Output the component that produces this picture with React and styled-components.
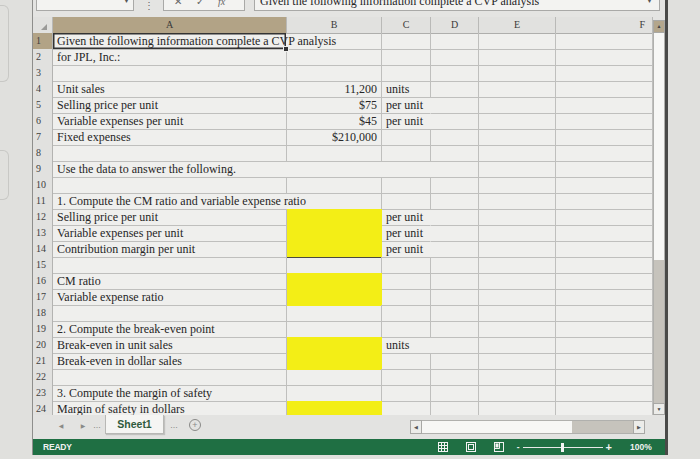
import React from 'react';
import styled, { createGlobalStyle } from 'styled-components';

const GlobalStyle = createGlobalStyle`
  html, body { margin: 0; padding: 0; }
  body {
    width: 700px;
    height: 459px;
    overflow: hidden;
    background: #e0e0dd;
    font-family: "Liberation Serif", "DejaVu Serif", serif;
    color: #262626;
  }
`;

const COLS = '20px 234px 95px 49px 48px 77px 97px';
const GRID = '#bfbfbd';

const Page = styled.div`
  display: flex;
  height: 459px;
`;

const LeftDesk = styled.div`
  width: 32px;
  flex-shrink: 0;
  display: flex;
  flex-direction: column;
  gap: 68px;
  padding-top: 5px;
`;

const DeskTile = styled.div`
  width: 8px;
  height: ${props => props.h}px;
  border: 1px solid #c8c8c5;
  border-left: none;
  border-radius: 0 6px 6px 0;
`;

const Window = styled.div`
  width: 632px;
  height: 455px;
  flex-shrink: 0;
  display: flex;
  flex-direction: column;
  background: #e4e4e2;
  border-left: 1px solid #8e8e8c;
  border-right: 3px solid #4a4a48;
  overflow: hidden;
`;

const FormulaBar = styled.div`
  height: 17px;
  flex-shrink: 0;
  display: flex;
  align-items: flex-end;
  overflow: hidden;
  padding-bottom: 6px;
  box-sizing: border-box;
`;

const Box = styled.div`
  height: 20px;
  box-sizing: border-box;
  border: 1px solid #a9a9a7;
  background: #f3f3f1;
  display: flex;
  align-items: center;
  font-size: 12px;
  flex-shrink: 0;
`;

const NameBox = styled(Box)`
  width: 98px;
  margin-left: 3px;
  justify-content: flex-end;
  padding-right: 3px;
  font-size: 7px;
  color: #555;
`;

const Dots = styled.div`
  width: 29px;
  text-align: center;
  font-size: 10px;
  line-height: 10px;
  color: #666;
`;

const FxBox = styled(Box)`
  width: 82px;
  gap: 14px;
  padding-left: 10px;
  font-size: 10px;
  color: #666;
`;

const FormulaInput = styled(Box)`
  flex: 1;
  margin-left: 9px;
  margin-right: 5px;
  padding: 0 6px 0 5px;
  justify-content: space-between;
`;

const Main = styled.div`
  height: 398px;
  flex-shrink: 0;
  display: flex;
`;

const Sheet = styled.div`
  width: 620px;
  display: flex;
  flex-direction: column;
  overflow: hidden;
  background: #efefed;
`;

const HeaderRow = styled.div`
  display: grid;
  grid-template-columns: ${COLS};
  height: 16px;
  flex-shrink: 0;
  background: #e1e1df;
`;

const ColHead = styled.div`
  box-sizing: border-box;
  border-right: 1px solid #b9b9b7;
  border-bottom: 1px solid #aeaeac;
  background: ${props => props.active ? '#b2a386' : 'transparent'};
  font-size: 10px;
  line-height: 16px;
  text-align: ${props => props.right ? 'right' : 'center'};
  padding-right: ${props => props.right ? '7px' : '0'};
  color: #3a3a3a;
`;

const Corner = styled(ColHead)`
  display: flex;
  align-items: flex-end;
  justify-content: flex-end;
  padding: 0 5px 3px 0;
`;

const Rows = styled.div`
  display: flex;
  flex-direction: column;
`;

const Row = styled.div`
  display: grid;
  grid-template-columns: ${COLS};
  height: 16px;
  flex-shrink: 0;
`;

const RowHead = styled.div`
  box-sizing: border-box;
  background: ${props => props.active ? '#b2a386' : '#e1e1df'};
  border-right: 1px solid #b3b3b1;
  border-bottom: 1px solid #cacac8;
  font-size: 10px;
  line-height: 16px;
  padding-left: 3px;
  color: #404040;
`;

const Cell = styled.div`
  box-sizing: border-box;
  position: relative;
  background: ${props => props.fill ? '#f3ee16' : 'transparent'};
  border-right: 1px solid ${props => props.open ? 'transparent' : props.fill ? '#f3ee16' : GRID};
  border-bottom: 1px solid ${props => props.edge ? '#4a4a40' : props.fill ? '#f3ee16' : GRID};
  box-shadow: ${props => props.selected ? 'inset 0 0 0 1.5px #333' : 'none'};
  font-size: 12px;
  line-height: 16px;
  padding: 0 4px 0 4px;
  white-space: nowrap;
  text-align: ${props => props.right ? 'right' : 'left'};
  direction: ${props => props.right ? 'rtl' : 'ltr'};
  overflow: visible;
  z-index: ${props => props.selected ? 1 : 0};

  &::after {
    content: '';
    display: ${props => props.selected ? 'block' : 'none'};
    position: absolute;
    right: -3px;
    bottom: -3px;
    width: 4px;
    height: 4px;
    background: #333;
    border: 1px solid #efefed;
  }
`;

const VScroll = styled.div`
  width: 12px;
  display: flex;
  flex-direction: column;
  padding-top: 3px;
  box-sizing: border-box;
`;

const ScrollBtn = styled.div`
  height: ${props => props.h}px;
  flex-shrink: 0;
  box-sizing: border-box;
  background: ${props => props.tan ? '#b3a68c' : '#ecece9'};
  border: 1px solid #a8a8a5;
  display: flex;
  align-items: center;
  justify-content: center;
  font-size: 5px;
  color: #444;
`;

const Track = styled.div`
  flex: ${props => props.grow ? '1' : `0 0 ${props.size}px`};
  background: ${props => props.thumb ? '#c6c3bc' : '#f7f7f5'};
  border-left: 1px solid #b0b0ad;
  border-right: 1px solid #b0b0ad;
`;

const TabBar = styled.div`
  height: 24px;
  flex-shrink: 0;
  display: flex;
  align-items: flex-start;
  background: #e3e3e1;
  font-family: "Liberation Sans", "DejaVu Sans", sans-serif;
  color: #8a8a88;
`;

const TabNav = styled.div`
  width: ${props => props.w}px;
  height: 20px;
  flex-shrink: 0;
  display: flex;
  align-items: center;
  justify-content: center;
  font-size: ${props => props.small ? 6 : 9}px;
`;

const SheetTab = styled.div`
  width: 59px;
  height: 19px;
  flex-shrink: 0;
  box-sizing: border-box;
  background: #f5f5f3;
  border: 1px solid #b8b8b5;
  border-top: none;
  box-shadow: 1px 1px 1px rgba(0, 0, 0, 0.15);
  display: flex;
  align-items: center;
  justify-content: center;
  font-size: 10.5px;
  font-weight: bold;
  color: #2f5a3d;
`;

const AddSheet = styled.div`
  width: 10px;
  height: 10px;
  border: 1px solid #8a8a88;
  border-radius: 50%;
  display: flex;
  align-items: center;
  justify-content: center;
  font-size: 9px;
  line-height: 9px;
  margin: 4px 0 0 5px;
`;

const HScroll = styled.div`
  display: flex;
  height: 14px;
  margin: 5px 20px 0 auto;
  width: 235px;
  box-sizing: border-box;
`;

const HBtn = styled.div`
  width: 12px;
  flex-shrink: 0;
  box-sizing: border-box;
  border: 1px solid #a8a8a5;
  background: #ecece9;
  display: flex;
  align-items: center;
  justify-content: center;
  font-size: 5px;
  color: #555;
`;

const HTrack = styled.div`
  flex: ${props => props.grow ? '1' : `0 0 ${props.size}px`};
  background: ${props => props.thumb ? '#c6c3bc' : '#f7f7f5'};
  border-top: 1px solid #b0b0ad;
  border-bottom: 1px solid #b0b0ad;
`;

const StatusBar = styled.div`
  height: 16px;
  flex-shrink: 0;
  display: flex;
  align-items: center;
  background: #1f6f43;
  color: #f2f2f2;
  font-family: "Liberation Sans", "DejaVu Sans", sans-serif;
  padding-left: 10px;
`;

const Ready = styled.span`
  font-size: 8.5px;
  font-weight: bold;
  letter-spacing: -0.2px;
`;

const ViewIcons = styled.div`
  display: flex;
  align-items: center;
  gap: 18px;
  margin-left: 366px;
`;

const Zoom = styled.div`
  display: flex;
  align-items: center;
  margin-left: 13px;
  font-size: 8.5px;
  font-weight: bold;
`;

const SliderLine = styled.div`
  width: 80px;
  height: 1px;
  margin: 0 3px;
  background: #e8e8e8;
  display: flex;
  justify-content: center;
  align-items: center;
`;

const SliderThumb = styled.div`
  width: 3px;
  height: 9px;
  background: #f4f4f4;
  margin-left: -1px;
`;

const Percent = styled.span`
  margin-left: 18px;
`;

const rows = [
  { a: 'Given the following information complete a CVP analysis', open: 'a', selected: true },
  { a: 'for JPL, Inc.:' },
  {},
  { a: 'Unit sales', b: '11,200', c: 'units' },
  { a: 'Selling price per unit', b: '$75', c: 'per unit', open: 'c' },
  { a: 'Variable expenses per unit', b: '$45', c: 'per unit', open: 'c' },
  { a: 'Fixed expenses', b: '$210,000' },
  {},
  { a: 'Use the data to answer the following.', open: 'abc' },
  {},
  { a: '1. Compute the CM ratio and variable expense ratio', open: 'a' },
  { a: 'Selling price per unit', fill: true, c: 'per unit', open: 'c' },
  { a: 'Variable expenses per unit', fill: true, edge: true, c: 'per unit', open: 'c' },
  { a: 'Contribution margin per unit', fill: true, edge: true, c: 'per unit', open: 'c' },
  {},
  { a: 'CM ratio', fill: true },
  { a: 'Variable expense ratio', fill: true },
  {},
  { a: '2. Compute the break-even point' },
  { a: 'Break-even in unit sales', fill: true, c: 'units', open: 'c' },
  { a: 'Break-even in dollar sales', fill: true },
  {},
  { a: '3. Compute the margin of safety' },
  { a: 'Margin of safety in dollars', fill: true },
];

function GridIcon() {
  return (
    <svg width="10" height="10" viewBox="0 0 10 10" fill="none" stroke="#f2f2f2" strokeWidth="1">
      <rect x="0.5" y="0.5" width="9" height="9" />
      <path d="M3.5 0.5V9.5M6.5 0.5V9.5M0.5 3.5H9.5M0.5 6.5H9.5" />
    </svg>
  );
}

function PageIcon() {
  return (
    <svg width="10" height="10" viewBox="0 0 10 10" fill="none" stroke="#f2f2f2" strokeWidth="1">
      <rect x="0.5" y="0.5" width="9" height="9" />
      <rect x="2.5" y="2.5" width="5" height="5" />
    </svg>
  );
}

function BreakIcon() {
  return (
    <svg width="10" height="10" viewBox="0 0 10 10" fill="none" stroke="#f2f2f2" strokeWidth="1">
      <rect x="0.5" y="0.5" width="9" height="9" />
      <path d="M0.5 6.5H5.5V0.5" />
      <rect x="1.5" y="1.5" width="3" height="4" fill="#f2f2f2" stroke="none" />
    </svg>
  );
}

function Triangle() {
  return (
    <svg width="6" height="6" viewBox="0 0 6 6">
      <path d="M6 0V6H0Z" fill="#9a9a98" />
    </svg>
  );
}

export default function App() {
  return (
    <Page>
      <GlobalStyle />
      <LeftDesk>
        <DeskTile h={75} />
        <DeskTile h={48} />
      </LeftDesk>
      <Window>
        <FormulaBar>
          <NameBox>▼</NameBox>
          <Dots>⋮</Dots>
          <FxBox><span>✕</span><span>✓</span><i>fx</i></FxBox>
          <FormulaInput>
            <span>Given the following information complete a CVP analysis</span>
            <span style={{ fontSize: 7, color: '#555' }}>▼</span>
          </FormulaInput>
        </FormulaBar>

        <Main>
          <Sheet>
            <HeaderRow>
              <Corner><Triangle /></Corner>
              <ColHead active>A</ColHead>
              <ColHead>B</ColHead>
              <ColHead>C</ColHead>
              <ColHead>D</ColHead>
              <ColHead>E</ColHead>
              <ColHead right>F</ColHead>
            </HeaderRow>
            <Rows>
              {rows.map((r, i) => {
                const open = r.open || '';
                return (
                  <Row key={i}>
                    <RowHead active={i === 0}>{i + 1}</RowHead>
                    <Cell open={open.includes('a')} selected={r.selected}>{r.a}</Cell>
                    <Cell right open={open.includes('b')} fill={r.fill} edge={r.edge}>{r.b}</Cell>
                    <Cell open={open.includes('c')}>{r.c}</Cell>
                    <Cell />
                    <Cell />
                    <Cell />
                  </Row>
                );
              })}
            </Rows>
          </Sheet>
          <VScroll>
            <ScrollBtn h={13} tan>▲</ScrollBtn>
            <Track size={227} />
            <Track grow thumb />
            <ScrollBtn h={12}>▼</ScrollBtn>
          </VScroll>
        </Main>

        <TabBar>
          <TabNav w={22} />
          <TabNav w={12} small>◀</TabNav>
          <TabNav w={12} small style={{ marginLeft: 10 }}>▶</TabNav>
          <TabNav w={16}>...</TabNav>
          <SheetTab>Sheet1</SheetTab>
          <TabNav w={20}>...</TabNav>
          <AddSheet>+</AddSheet>
          <HScroll>
            <HBtn>◀</HBtn>
            <HTrack size={150} />
            <HTrack grow thumb />
            <HBtn>▶</HBtn>
          </HScroll>
        </TabBar>

        <StatusBar>
          <Ready>READY</Ready>
          <ViewIcons>
            <GridIcon />
            <PageIcon />
            <BreakIcon />
          </ViewIcons>
          <Zoom>
            <span>-</span>
            <SliderLine><SliderThumb /></SliderLine>
            <span style={{ fontSize: 11 }}>+</span>
            <Percent>100%</Percent>
          </Zoom>
        </StatusBar>
      </Window>
    </Page>
  );
}
